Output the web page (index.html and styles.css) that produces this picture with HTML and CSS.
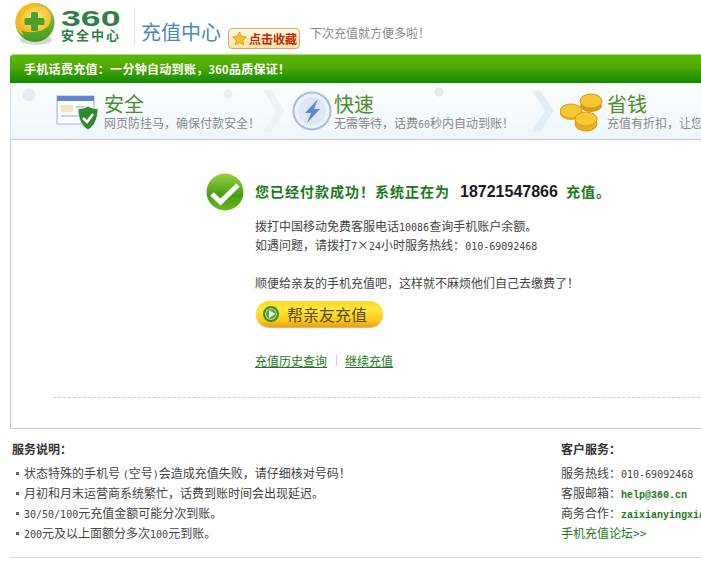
FILE: index.html
```html
<!DOCTYPE html>
<html lang="zh-CN">
<head>
    <meta charset="UTF-8">
    <title>360安全中心 充值中心</title>
    <link rel="stylesheet" href="styles.css">
</head>
<body>
<div class="page">
    <header class="top">
        <svg class="logo-icon" width="44" height="44" viewBox="0 0 44 44">
            <defs>
                <linearGradient id="ringGreen" x1="0" y1="0" x2="0" y2="1">
                    <stop offset="0" stop-color="#9ccc3c"/>
                    <stop offset="1" stop-color="#3f9a24"/>
                </linearGradient>
                <radialGradient id="ballYellow" cx="0.5" cy="0.45" r="0.6">
                    <stop offset="0" stop-color="#fff08a"/>
                    <stop offset="1" stop-color="#f4b418"/>
                </radialGradient>
            </defs>
            <ellipse cx="22" cy="38" rx="16" ry="5" fill="#d8d8cc"/>
            <circle cx="21" cy="20.500" r="19.500" fill="url(#ringGreen)"/>
            <path d="M1.500 21C1 10 10 1 21 1c3 0 6 .7 8 2C18 3 8 10 7 22c-.3 5 1 9 3 12C5 31 2 27 1.500 21Z" fill="#f5bc1c"/>
            <path d="M6 27C3 14 14 3 27 4c6 1 9 5 10 10 1 8-5 14-12 15-7 2-14 2-19-2Z" fill="url(#ballYellow)"/>
            <path d="M17 11.500a1.500 1.500 0 0 1 1.500-1.500h4a1.500 1.500 0 0 1 1.500 1.500V16h5a1.500 1.500 0 0 1 1.500 1.500v4a1.500 1.500 0 0 1-1.500 1.500h-5v4.500a1.500 1.500 0 0 1-1.500 1.500h-4a1.500 1.500 0 0 1-1.500-1.500V23h-5a1.500 1.500 0 0 1-1.500-1.500v-4a1.500 1.500 0 0 1 1.500-1.500h5z" fill="#4aa02a"/>
        </svg>
        <div class="logo-text">
            <span class="logo-num">360</span>
            <span class="logo-name">安全中心</span>
        </div>
        <div class="logo-rule"></div>
        <div class="site-name">充值中心</div>
        <a class="fav-btn">
            <svg class="fav-star" width="15" height="15" viewBox="0 0 16 16"><path d="M8 1l2.200 4.600 5 .7-3.600 3.500.9 5L8 12.400 3.500 14.800l.9-5L.8 6.300l5-.7z" fill="#f8c030" stroke="#d89010" stroke-width=".8"/></svg>点击收藏
        </a>
        <div class="fav-tip">下次充值就方便多啦！</div>
    </header>

    <div class="green-bar">手机话费充值：一分钟自动到账，<span class="bar-num">360</span>品质保证！</div>

    <section class="features">
        <div class="feature feature-safe">
            <svg class="feature-icon" width="44" height="44" viewBox="0 0 44 44">
                <rect x="1" y="7" width="37" height="28" fill="#fbfcfe" stroke="#9ab2dc"/>
                <rect x="1" y="7" width="37" height="5" fill="#5f86d0"/>
                <rect x="5" y="16" width="12" height="7" fill="#f0e8c0"/>
                <rect x="5" y="26" width="20" height="2" fill="#c8d4e4"/>
                <rect x="20" y="17" width="14" height="2" fill="#c8d4e4"/>
                <path d="M32 17c3 2 6 2.500 10 2.500 0 11-4 18-10 21.500-6-3.500-10-10.500-10-21.500 4 0 7-.5 10-2.500z" fill="#2f8a2a" stroke="#e8f4e8" stroke-width="1"/>
                <path d="M27 29l4 4 6-8" fill="none" stroke="#fff" stroke-width="2.500"/>
            </svg>
            <div class="feature-text">
                <h3>安全</h3>
                <p>网页防挂马，确保付款安全！</p>
            </div>
        </div>
        <svg class="chevron" width="30" height="46" viewBox="0 0 30 48"><path d="M0 2h9l14 22L9 46H0l14-22z" fill="#ebf3f9"/></svg>
        <div class="feature feature-fast">
            <svg class="feature-icon" width="42" height="42" viewBox="0 0 42 42">
                <circle cx="20" cy="21" r="18.500" fill="#eef2fb" stroke="#a8b9e0" stroke-width="2"/>
                <circle cx="20" cy="21" r="14" fill="#dfe7f7"/>
                <path d="M26 9L13 23h6l-4 10 13-14h-6z" fill="#5f86d8"/>
            </svg>
            <div class="feature-text">
                <h3>快速</h3>
                <p>无需等待，话费<span class="num">60</span>秒内自动到账！</p>
            </div>
        </div>
        <svg class="chevron chevron-two" width="28" height="46" viewBox="0 0 30 48"><path d="M0 2h9l14 22L9 46H0l14-22z" fill="#e2edf5"/></svg>
        <div class="feature feature-save">
            <svg class="feature-icon" width="44" height="44" viewBox="0 0 44 44">
                <ellipse cx="31" cy="17" rx="11" ry="6" fill="#d89a18"/>
                <ellipse cx="31" cy="12" rx="11" ry="7" fill="#f5c832" stroke="#d89a18"/>
                <path d="M0 22v3c1 4 7 6 11 6s10-2 11-6v-3" fill="#e8b020"/>
                <ellipse cx="11" cy="22" rx="11" ry="7" fill="#f5c832" stroke="#d89a18"/>
                <ellipse cx="26" cy="35" rx="11" ry="7" fill="#e8b020" stroke="#d89a18"/>
                <ellipse cx="26" cy="30" rx="11" ry="7" fill="#f5c832" stroke="#d89a18"/>
            </svg>
            <div class="feature-text">
                <h3>省钱</h3>
                <p>充值有折扣，让您省钱又省心！</p>
            </div>
        </div>
    </section>

    <main class="result-box">
        <div class="result-head">
            <svg width="38" height="38" viewBox="0 0 38 38">
                <defs>
                    <linearGradient id="okGreen" x1="0" y1="0" x2="0" y2="1">
                        <stop offset="0" stop-color="#98d040"/>
                        <stop offset=".6" stop-color="#459e12"/>
                        <stop offset="1" stop-color="#6cb81c"/>
                    </linearGradient>
                </defs>
                <circle cx="19" cy="19" r="18.500" fill="url(#okGreen)"/>
                <path d="M6 21l8.500 8L32 12" fill="none" stroke="#fff" stroke-width="5"/>
            </svg>
            <h2>您已经付款成功！系统正在为<span class="phone">18721547866</span>充值。</h2>
        </div>
        <div class="result-body">
            <p>拨打中国移动免费客服电话<span class="num">10086</span>查询手机账户余额。</p>
            <p>如遇问题，请拨打<span class="num">7</span>×<span class="num">24</span>小时服务热线：<span class="num">010-69092468</span></p>
            <p class="share">顺便给亲友的手机充值吧，这样就不麻烦他们自己去缴费了！</p>
            <a class="help-btn">
                <span class="play"></span>帮亲友充值
            </a>
            <div class="links">
                <a>充值历史查询</a>
                <span class="sep"></span>
                <a>继续充值</a>
            </div>
        </div>
        <div class="dash"></div>
    </main>

    <footer class="notes">
        <div class="notes-left">
            <h4>服务说明：</h4>
            <ul>
                <li>状态特殊的手机号 <span class="num">(</span>空号<span class="num">)</span>会造成充值失败，请仔细核对号码！</li>
                <li>月初和月末运营商系统繁忙，话费到账时间会出现延迟。</li>
                <li><span class="num">30/50/100</span>元充值金额可能分次到账。</li>
                <li><span class="num">200</span>元及以上面额分多次<span class="num">100</span>元到账。</li>
            </ul>
        </div>
        <div class="notes-right">
            <h4>客户服务：</h4>
            <p>服务热线：<span class="num">010-69092468</span></p>
            <p>客服邮箱：<span class="mail">help@360.cn</span></p>
            <p>商务合作：<span class="mail">zaixianyingxiao@360.cn</span></p>
            <p><a class="forum">手机充值论坛&gt;&gt;</a></p>
        </div>
    </footer>
</div>
</body>
</html>
```

FILE: styles.css
```css
html, body {
    margin: 0;
    padding: 0;
    background: #fff;
    overflow: hidden;
}
body {
    font-family: "Noto Sans CJK SC", sans-serif;
    font-size: 12px;
    color: #444;
}
h2, h3, h4, p, ul {
    margin: 0;
    padding: 0;
}
.page {
    width: 960px;
    height: 562px;
    padding-left: 10px;
    overflow: hidden;
}
.num {
    font-family: "DejaVu Sans Mono", monospace;
    font-size: 10px;
    line-height: 1;
}
.mail {
    font-family: "Liberation Mono", monospace;
    font-size: 10px;
    line-height: 1;
    font-weight: bold;
    color: #1a7a1a;
}

/* top */
.top {
    height: 54px;
    display: flex;
    align-items: flex-start;
}
.logo-icon {
    margin: 2px 0 0 4px;
}
.logo-text {
    width: 73px;
    margin: 9px 0 0 3px;
    color: #2f7f48;
    display: flex;
    flex-direction: column;
}
.logo-num {
    font-family: "Liberation Sans", sans-serif;
    font-size: 22px;
    font-weight: bold;
    line-height: 19px;
    transform: scaleX(1.62);
    transform-origin: left;
}
.logo-name {
    font-size: 13px;
    font-weight: bold;
    line-height: 13px;
    letter-spacing: 2px;
    white-space: nowrap;
}
.logo-rule {
    width: 1px;
    height: 36px;
    margin: 8px 0 0 0;
    background: #dde3e8;
}
.site-name {
    margin: 17px 0 0 6px;
    font-size: 20px;
    line-height: 30px;
    color: #4a88bc;
    white-space: nowrap;
}
.fav-btn {
    margin: 28px 0 0 7px;
    width: 72px;
    height: 21px;
    box-sizing: border-box;
    display: flex;
    align-items: center;
    border: 1px solid #d8a868;
    border-radius: 4px;
    background: linear-gradient(#fffbe8, #fbe3a8);
    color: #c02808;
    font-size: 12px;
    font-weight: bold;
    white-space: nowrap;
}
.fav-star {
    margin: 0 2px 0 3px;
    flex-shrink: 0;
}
.fav-tip {
    margin: 25px 0 0 10px;
    line-height: 16px;
    color: #888;
    white-space: nowrap;
}

/* green title bar */
.green-bar {
    height: 29px;
    line-height: 28px;
    padding-left: 14px;
    letter-spacing: .3px;
    border-radius: 4px 4px 0 0;
    border-top: 1px solid #a8dc70;
    box-sizing: border-box;
    background: linear-gradient(#5cb806, #4fa804 45%, #0f8a00);
    color: #fff;
    font-weight: bold;
}
.bar-num {
    font-size: 11px;
}

/* feature strip */
.features {
    height: 57px;
    padding-left: 45px;
    box-sizing: border-box;
    display: flex;
    align-items: center;
    border-left: 1px solid #dbe3ea;
    border-bottom: 1px solid #c8ced4;
    background:
        radial-gradient(circle at 18px 12px, #e4edf5 6px, transparent 7px),
        radial-gradient(circle at 217px 11px, #e8f0f6 4px, transparent 5px),
        radial-gradient(circle at 428px 9px, #dfeaf3 4px, transparent 5px),
        linear-gradient(#fcfeff, #eef6fb);
    overflow: hidden;
}
.feature {
    display: flex;
    align-items: center;
    flex-shrink: 0;
    white-space: nowrap;
}
.feature-safe {
    width: 206px;
}
.feature-fast {
    width: 240px;
}
.feature-icon {
    flex-shrink: 0;
}
.feature-safe .feature-text {
    margin-left: 4px;
}
.feature-fast .feature-text {
    margin-left: 0;
}
.feature-save .feature-text {
    margin-left: 3px;
}
.feature-text h3 {
    font-size: 20px;
    font-weight: normal;
    line-height: 22px;
    color: #4b8f2a;
}
.feature-text p {
    line-height: 15px;
    color: #888;
}
.chevron {
    width: 30px;
    flex-shrink: 0;
}
.chevron-two {
    width: 28px;
}

/* result box */
.result-box {
    height: 289px;
    box-sizing: border-box;
    border-left: 1px solid #c8ced4;
    border-bottom: 1px solid #c8ced4;
    padding: 33px 0 0 42px;
}
.result-head {
    display: flex;
    align-items: center;
    margin-left: 153px;
    height: 38px;
}
.result-head h2 {
    margin: 0 0 2px 11px;
    font-size: 14px;
    letter-spacing: 1px;
    line-height: 34px;
    color: #1a7a1a;
    white-space: nowrap;
}
.phone {
    margin: 0 8px 0 10px;
    font-family: "Liberation Sans", sans-serif;
    font-size: 16px;
    letter-spacing: 0;
    color: #1a1a1a;
}
.result-body {
    margin: 5px 0 0 202px;
    color: #444;
    line-height: 19px;
    height: 181px;
}
.result-body p {
    white-space: nowrap;
}
.share {
    margin-top: 19px;
}
.help-btn {
    display: flex;
    align-items: center;
    width: 127px;
    height: 26px;
    margin: 9px 0 0 1px;
    border-radius: 13px;
    background: linear-gradient(#fbd82c, #ffe838 35%, #fcc81c 75%, #e8a010);
    box-shadow: 0 1px 1px #d8b080;
    color: #5a4a10;
    font-size: 16px;
    white-space: nowrap;
}
.play {
    width: 12px;
    height: 12px;
    margin: 0 8px 0 7px;
    border: 2px solid #3f8a1c;
    border-radius: 50%;
    background: #5aa82c;
    box-shadow: inset 0 0 0 1px #cfe8a0;
    position: relative;
    flex-shrink: 0;
}
.play::after {
    content: "";
    position: absolute;
    left: 4px;
    top: 2px;
    border-left: 6px solid #fff;
    border-top: 4px solid transparent;
    border-bottom: 4px solid transparent;
}
.links {
    margin-top: 24px;
    display: flex;
    align-items: center;
    gap: 8px;
}
.links a {
    color: #1a7a1a;
    text-decoration: underline;
}
.sep {
    width: 1px;
    height: 11px;
    margin-left: 1px;
    background: #d0d0d0;
}
.dash {
    border-top: 1px dashed #ccc;
}

/* footer notes */
.notes {
    height: 129px;
    box-sizing: border-box;
    padding: 10px 0 0 2px;
    display: flex;
    border-bottom: 1px solid #d8d8d8;
}
.notes h4 {
    font-size: 12px;
    line-height: 20px;
    color: #333;
    margin-bottom: 4px;
}
.notes-left {
    width: 549px;
    flex-shrink: 0;
}
.notes li {
    list-style: none;
    line-height: 20px;
    padding-left: 12px;
    position: relative;
    white-space: nowrap;
}
.notes li::before {
    content: "";
    position: absolute;
    left: 4px;
    top: 9px;
    width: 3px;
    height: 3px;
    background: #666;
}
.notes-right p {
    line-height: 20px;
    white-space: nowrap;
}
.forum {
    color: #1a7a1a;
}
```
